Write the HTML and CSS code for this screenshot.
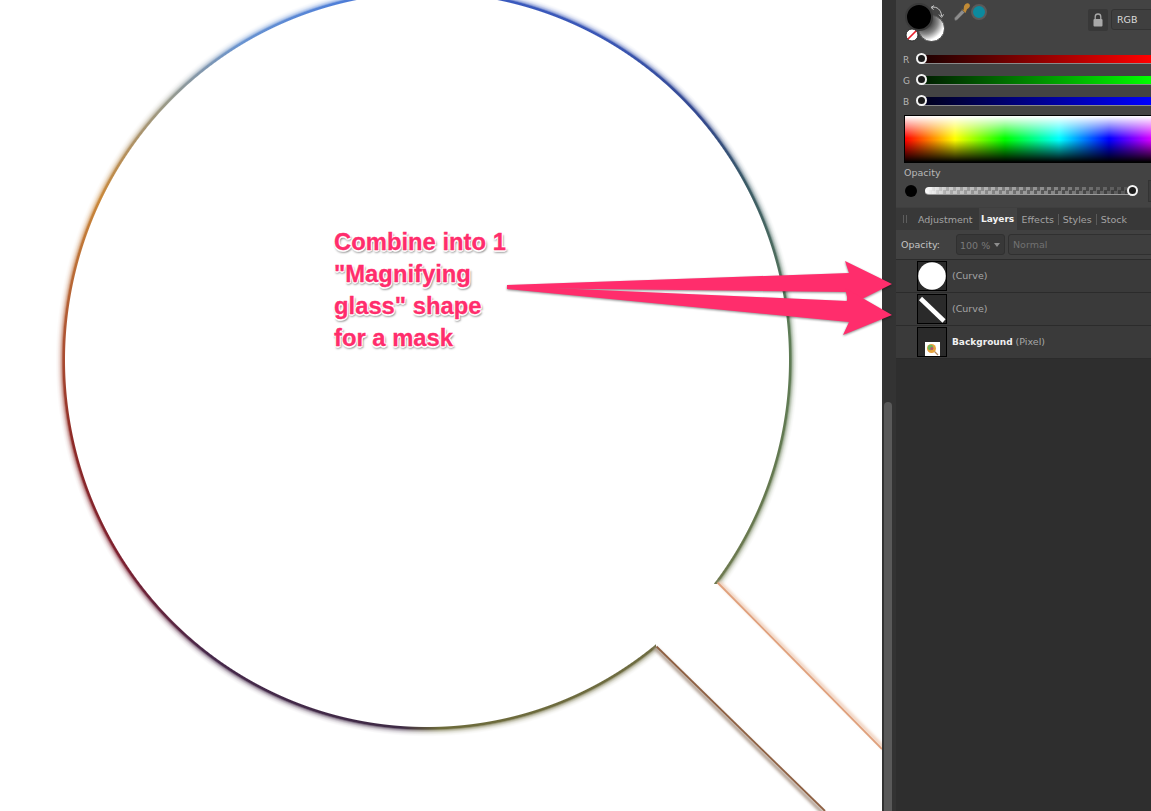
FILE: index.html
```html
<!DOCTYPE html>
<html lang="en">
<head>
<meta charset="utf-8">
<title>Combine into 1 magnifying glass shape</title>
<link rel="stylesheet" href="styles.css">
</head>
<body>
<div class="app">
  <main class="canvas">
    <div class="ring"></div>
    <svg class="handle" width="882" height="811" viewBox="0 0 882 811">
      <polygon class="handle-fill" points="718,584 882,750 882,811 826,811 656,647 656,641 712,584"/>
      <line class="halo halo-up" x1="719" y1="582" x2="884" y2="748"/>
      <line class="halo halo-low" x1="655" y1="648" x2="823" y2="813"/>
      <line class="edge edge-up" x1="717.500" y1="582.500" x2="882" y2="749"/>
      <line class="edge edge-low" x1="656.500" y1="646.500" x2="825" y2="811"/>
    </svg>
  </main>

  <aside class="panel">
    <div class="scroll"><div class="thumb"></div></div>
    <div class="studio">
      <section class="colour">
        <div class="chips">
          <div class="wells">
            <div class="well well-back"></div>
            <div class="well well-front"></div>
            <svg class="none" width="14" height="14" viewBox="0 0 14 14"><circle cx="7" cy="7" r="6" fill="#fff" stroke="#2c2c2c"/><line x1="3" y1="11" x2="11" y2="3" stroke="#e8202c" stroke-width="1.700"/></svg>
            <svg class="swap" width="14" height="15" viewBox="0 0 14 15" fill="none" stroke="#c9c9c9" stroke-width="1"><path d="M2 2.200C7 1.500 11 4.500 11.600 11"/><path d="M1 2.400 4 .6M1 2.400 3.600 4.600"/><path d="M11.600 12.400 9 9.600M11.600 12.400 13.600 9.400"/></svg>
          </div>
          <svg class="dropper" width="18" height="20" viewBox="0 0 18 20"><path d="M2 18.500 1.500 16 9 8l2.500 2.500L4 18z" fill="#8d8d8d" stroke="#5f5f5f" stroke-width=".5"/><path d="M8 6.500 10.500 8.200 11 4.200C12 1.200 15 .5 16.300 2s.5 4-2.300 5.200L12.500 11z" fill="#c08a35"/></svg>
          <span class="teal"></span>
          <span class="lock">
            <svg width="10" height="14" viewBox="0 0 10 14"><path d="M2.200 6.500V3.800a2.800 2.800 0 0 1 5.600 0v2.700" fill="none" stroke="#a9a9a9" stroke-width="1.300"/><rect x=".5" y="6" width="9" height="7.500" rx="1" fill="#a9a9a9"/></svg>
          </span>
          <span class="mode">RGB</span>
        </div>

        <div class="channel"><span class="ch-label">R</span><div class="track track-r"><span class="knob"></span></div></div>
        <div class="channel"><span class="ch-label">G</span><div class="track track-g"><span class="knob"></span></div></div>
        <div class="channel"><span class="ch-label">B</span><div class="track track-b"><span class="knob"></span></div></div>

        <div class="spectrum"></div>
        <div class="op-label">Opacity</div>
        <div class="op-row">
          <span class="op-dot"></span>
          <div class="op-track"><span class="knob knob-end"></span></div>
          <span class="op-box"></span>
        </div>
      </section>

      <nav class="tabs">
        <span class="grip"></span>
        <span class="tab tab-adj">Adjustment</span>
        <span class="tab tab-on">Layers</span>
        <span class="tab tab-fx">Effects</span>
        <span class="tab-sep"></span>
        <span class="tab">Styles</span>
        <span class="tab-sep"></span>
        <span class="tab">Stock</span>
      </nav>

      <div class="layer-tools">
        <span class="lt-label">Opacity:</span>
        <span class="lt-select">100 %<i class="caret"></i></span>
        <span class="lt-blend">Normal</span>
      </div>

      <div class="layer">
        <span class="lthumb">
          <svg width="28" height="28" viewBox="0 0 28 28"><circle cx="14" cy="14" r="13.800" fill="#fff"/></svg>
        </span>
        <span class="lname">(Curve)</span>
      </div>
      <div class="layer">
        <span class="lthumb">
          <svg width="28" height="28" viewBox="0 0 28 28"><line x1="2.500" y1="3.500" x2="26" y2="26" stroke="#fff" stroke-width="4.500"/></svg>
        </span>
        <span class="lname">(Curve)</span>
      </div>
      <div class="layer">
        <span class="lthumb lthumb-bg">
          <svg class="mini" width="15" height="14" viewBox="0 0 15 14">
            <rect width="15" height="14" fill="#fff"/>
            <circle cx="6.500" cy="6.500" r="4.500" fill="#e8a33c"/>
            <circle cx="5.500" cy="5.500" r="2.800" fill="#6fb35a"/>
            <circle cx="6.800" cy="6.500" r="1.500" fill="#c0506e"/>
            <line x1="9.500" y1="9.500" x2="13" y2="13" stroke="#b98a5c" stroke-width="1.200"/>
          </svg>
        </span>
        <span class="lname"><b>Background</b> (Pixel)</span>
      </div>
    </div>
  </aside>
</div>

<svg class="arrows" width="1151" height="811" viewBox="0 0 1151 811">
  <polygon points="507,285 849,273 845,261 892,284 846,307 848,292 507,288"/>
  <polygon points="507,286 848,301 845,288 892,315 843,335 849,322 507,289"/>
</svg>
<p class="note">Combine into 1<br>"Magnifying<br>glass" shape<br>for a mask</p>
</body>
</html>
```
FILE: styles.css
```css
* { box-sizing: border-box; }
html, body { margin: 0; height: 100%; overflow: hidden; background: #fff; }
body { position: relative; font-family: "DejaVu Sans", sans-serif; font-size: 9.500px; }

.app { display: flex; width: 1151px; height: 811px; }

/* image on the canvas */
.canvas { position: relative; flex: 0 0 882px; height: 811px; overflow: hidden; background: #fff; }
.ring {
  position: absolute; left: 55px; top: -12px; width: 744px; height: 744px; border-radius: 50%;
  transform: scaleY(1.0138);
  background: conic-gradient(
    #3a5cc4 0deg, #3a56b4 30deg, #34488e 49deg, #3a5a66 61deg, #5d7c56 85deg,
    #64784f 110deg, #6e7a50 127deg, #6e6c42 141deg, #6c6a3a 178deg,
    #3e2a45 184deg, #46284a 217deg, #7c2030 237deg, #8e2a26 258deg, #a84a30 270deg,
    #c9883a 296deg, #9a9a88 314deg, #6a94d0 329deg, #4f7fd8 346deg, #3a5cc4 360deg);
  -webkit-mask: radial-gradient(circle at center, transparent 361.500px, #000 362.500px, #000 364px, rgba(0,0,0,.5) 365.500px, rgba(0,0,0,.2) 367.500px, rgba(0,0,0,.06) 369.500px, transparent 371.500px);
  mask: radial-gradient(circle at center, transparent 361.500px, #000 362.500px, #000 364px, rgba(0,0,0,.5) 365.500px, rgba(0,0,0,.2) 367.500px, rgba(0,0,0,.06) 369.500px, transparent 371.500px);
}
.handle { position: absolute; left: 0; top: 0; }
.handle-fill { fill: #fff; }
.halo { stroke-width: 3.500; filter: blur(1.500px); }
.halo-up { stroke: #f0d0bc; }
.halo-low { stroke: #ad9a8c; }
.edge { stroke-width: 1.800; }
.edge-up { stroke: #dfa07c; }
.edge-low { stroke: #8e6042; }

/* side panel */
.panel { flex: 1; display: flex; min-width: 0; height: 811px; background: #2e2e2e; }
.scroll { flex: 0 0 14px; padding: 402px 0 0 2px; background: #333; }
.thumb { width: 8px; height: 100%; border-radius: 4px 4px 0 0; background: #595959; }
.studio { flex: 1; min-width: 0; overflow: hidden; color: #bdbdbd; }

.colour { height: 207px; background: #434343; overflow: hidden; }
.chips { display: flex; align-items: flex-start; height: 49px; }
.wells { position: relative; flex: 0 0 44px; height: 44px; margin: 3px 0 0 8px; }
.well { position: absolute; border-radius: 50%; }
.well-back { left: 14px; top: 12px; width: 27px; height: 27px; border: 1px solid #5a5a5a; background: radial-gradient(circle at 22% 18%, #111 10%, #8a8a8a 48%, #fff 72%); }
.well-front { left: 1px; top: 0; width: 28px; height: 28px; border: 2px solid #3a3a3a; background: #000; }
.none { position: absolute; left: 1px; top: 25px; }
.swap { position: absolute; left: 26px; top: 2px; }
.dropper { flex: 0 0 18px; margin: 2px 0 0 5px; }
.teal { flex: 0 0 16px; height: 16px; margin: 4px 0 0 0; border-radius: 50%; border: 2px solid #5a5a5a; background: #0c8a9e; }
.lock { display: flex; align-items: center; justify-content: center; flex: 0 0 20px; height: 22px; margin: 9px 0 0 101px; border-radius: 2px; background: #383838; }
.mode { flex: 0 0 80px; height: 21px; margin: 9px 0 0 3px; padding-left: 5px; line-height: 20px; border: 1px solid #333; border-radius: 3px; background: #3f3f3f; color: #dcdcdc; }

.channel { display: flex; align-items: center; height: 21px; padding-left: 7px; }
.ch-label { flex: 0 0 19px; font-size: 9px; color: #b5b5b5; }
.track { position: relative; flex: 1; height: 9px; border-bottom: 1px solid #8a8a8a; }
.track-r { background: linear-gradient(90deg, #1c0000, #ff0000 229px); }
.track-g { background: linear-gradient(90deg, #001c00, #00ff00 229px); }
.track-b { background: linear-gradient(90deg, #00001c, #0000ff 229px); }
.knob { position: absolute; left: -6px; top: -2px; width: 11px; height: 11px; border: 2px solid #f4f4f4; border-radius: 50%; background: #1c1c1c; }

.spectrum {
  height: 48px; margin: 3px 0 0 8px; border: 1px solid #000; border-right: 0;
  background:
    linear-gradient(180deg, #fff 0, rgba(255,255,255,0) 48%, rgba(0,0,0,0) 52%, #000 100%),
    linear-gradient(90deg, #f00 0, #ff0 50px, #0f0 100px, #0ff 154px, #00f 204px, #f0f 254px);
}
.op-label { height: 13px; margin: 3px 0 0 8px; font-size: 9.500px; line-height: 13px; color: #b8b8b8; }
.op-row { display: flex; align-items: center; height: 24px; padding-left: 9px; }
.op-dot { flex: 0 0 12px; height: 12px; border-radius: 50%; background: #000; }
.op-track {
  position: relative; flex: 0 0 208px; height: 8px; margin-left: 8px; border-radius: 4px 0 0 4px; border-bottom: 1px solid #9a9a9a;
  background:
    linear-gradient(90deg, #fff 0, rgba(255,255,255,.55) 10%, rgba(120,120,120,.15) 60%, rgba(50,50,50,.65) 100%),
    repeating-conic-gradient(#8c8c8c 0 25%, #4a4a4a 0 50%) 0 0 / 7px 7px;
}
.knob-end { left: auto; right: -5px; top: -2px; }
.op-box { flex: 0 0 20px; height: 22px; margin-left: 15px; border: 1px solid #333; background: #3c3c3c; }

.tabs { display: flex; align-items: stretch; height: 23px; line-height: 23px; background: #383838; border-top: 1px solid #3f3f3f; font-weight: 500; }
.grip { flex: 0 0 4px; height: 8px; margin: 7px 0 0 7px; border-left: 1px solid #5e5e5e; border-right: 1px solid #5e5e5e; }
.tab { color: #a3a3a3; font-size: 9.500px; }
.tab-adj { margin-left: 11px; }
.tab-on { margin-left: 6px; padding: 0 2px; width: 38px; text-align: center; background: #434343; color: #f2f2f2; font-weight: 700; font-size: 9px; }
.tab-fx { margin-left: 5px; }
.tab-sep { flex: 0 0 1px; height: 11px; margin: 6px 4px 0; background: #5a5a5a; }

.layer-tools { display: flex; align-items: center; height: 30px; padding-left: 5px; background: #414141; border-bottom: 1px solid #2b2b2b; }
.lt-label { flex: 0 0 55px; color: #c4c4c4; }
.lt-select { position: relative; flex: 0 0 49px; height: 21px; padding-left: 3px; line-height: 21px; border: 1px solid #303030; border-radius: 3px; background: #383838; color: #7a7a7a; }
.caret { position: absolute; right: 4px; top: 8px; border: 3px solid transparent; border-top: 4px solid #8e8e8e; border-bottom: 0; }
.lt-blend { flex: 0 0 160px; height: 21px; margin-left: 3px; padding-left: 4px; line-height: 20px; border: 1px solid #303030; border-radius: 3px; background: #3e3e3e; color: #717171; }

.layer { display: flex; align-items: center; height: 33px; padding-left: 21px; background: #3a3a3a; border-bottom: 1px solid #2b2b2b; }
.lthumb { position: relative; flex: 0 0 30px; height: 30px; border: 1px solid #000; background: #2a2a2a; }
.lthumb svg { display: block; }
.lthumb .mini { position: absolute; left: 7px; bottom: 0; }
.lname { margin: 0 0 2px 5px; color: #a6a6a6; font-size: 9.500px; }
.lname b { color: #f0f0f0; font-size: 9px; }

/* annotation layered above everything */
.arrows { position: absolute; left: 0; top: 0; filter: drop-shadow(0 1px 1px rgba(0,0,0,.45)); }
.arrows polygon { fill: #ff2d6c; }
.note {
  position: absolute; left: 334px; top: 226px; margin: 0;
  font: 700 23.800px/32px "Liberation Sans", Arial, sans-serif; color: #ff2d6c;
  -webkit-text-stroke: .3px #ff2d6c;
  text-shadow: 1px 1px 0 #fff, -1px -1px 0 #fff, 1px -1px 0 #fff, -1px 1px 0 #fff, 0 2px 1px #fff, 2px 2px 2px rgba(0,0,0,.35), 0 3px 2px rgba(0,0,0,.3);
}
```
